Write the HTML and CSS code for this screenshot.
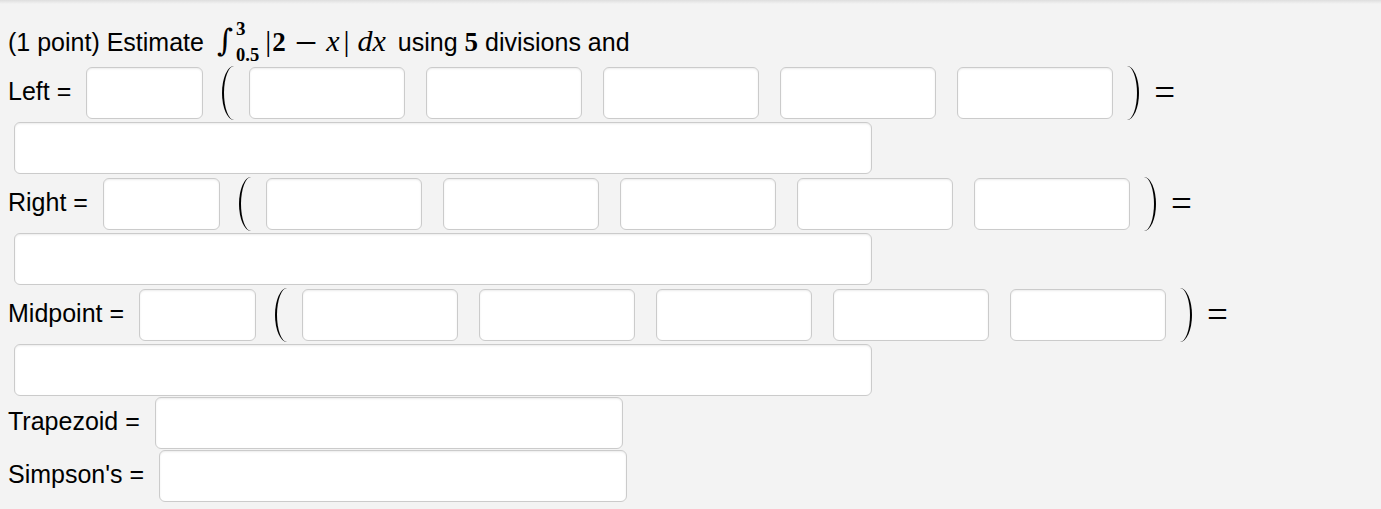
FILE: index.html
```html
<!DOCTYPE html>
<html>
<head>
<meta charset="utf-8">
<link rel="stylesheet" href="styles.css">
</head>
<body>
<div class="page">
  <p class="q">(1 point) Estimate <span class="math"><span class="int">∫</span><span class="sup">3</span><span class="sub">0.5</span><span class="abs">|</span><span class="mn">2</span><span class="mo">−</span><i class="mi">x</i><span class="abs close-abs">|</span><i class="mi d">d</i><i class="mi last">x</i></span> using <span class="mn five">5</span> divisions and</p>

  <div class="row">
    <span class="lbl">Left =</span>
    <input class="in sm" type="text">
    <span class="paren open"></span>
    <input class="in md first" type="text">
    <input class="in md" type="text">
    <input class="in md" type="text">
    <input class="in md" type="text">
    <input class="in md" type="text">
    <span class="paren close"></span>
    <span class="eq">=</span>
  </div>
  <div class="wrow"><input class="in wide" type="text"></div>

  <div class="row">
    <span class="lbl">Right =</span>
    <input class="in sm" type="text">
    <span class="paren open"></span>
    <input class="in md first" type="text">
    <input class="in md" type="text">
    <input class="in md" type="text">
    <input class="in md" type="text">
    <input class="in md" type="text">
    <span class="paren close"></span>
    <span class="eq">=</span>
  </div>
  <div class="wrow"><input class="in wide" type="text"></div>

  <div class="row">
    <span class="lbl">Midpoint =</span>
    <input class="in sm" type="text">
    <span class="paren open"></span>
    <input class="in md first" type="text">
    <input class="in md" type="text">
    <input class="in md" type="text">
    <input class="in md" type="text">
    <input class="in md" type="text">
    <span class="paren close"></span>
    <span class="eq">=</span>
  </div>
  <div class="wrow"><input class="in wide" type="text"></div>

  <div class="srow">
    <span class="lbl">Trapezoid =</span>
    <input class="in lg" type="text">
  </div>
  <div class="srow">
    <span class="lbl">Simpson's =</span>
    <input class="in lg" type="text">
  </div>
</div>
</body>
</html>
```

FILE: styles.css
```css
html, body {
  margin: 0;
  padding: 0;
  background: #f3f3f3;
}
.page {
  background: linear-gradient(#dedede, #f3f3f3 4px);
  min-height: 509px;
  box-sizing: border-box;
  padding: 27px 0 0 8px;
  font-family: "Liberation Sans", Arial, sans-serif;
  font-size: 25px;
  color: #000;
}
.q {
  margin: 0;
  height: 30px;
  line-height: 30px;
  white-space: nowrap;
}
.math {
  font-family: "Liberation Serif", "Times New Roman", serif;
  font-size: 30px;
  line-height: 0;
}
.int {
  font-family: "DejaVu Serif", serif;
  font-size: 31px;
  margin-left: 6px;
  margin-right: 3px;
  line-height: 0;
}
.sup, .sub {
  font-family: "Liberation Serif", "Times New Roman", serif;
  font-weight: bold;
  font-size: 19px;
  line-height: 0;
}
.sup {
  display: inline-block;
  width: 0;
  vertical-align: 16px;
  white-space: nowrap;
}
.sub {
  font-size: 18.5px;
  vertical-align: -10px;
  margin-right: 6px;
}
.mn {
  font-family: "Liberation Serif", "Times New Roman", serif;
  font-weight: bold;
  font-size: 27px;
  line-height: 0;
}
.abs + .mn {
  margin-left: 1px;
}
.mo {
  font-size: 40px;
  line-height: 0;
  vertical-align: -5px;
  margin: 0 9px 0 9px;
}
.mi {
  font-style: italic;
}
.close-abs {
  margin-left: 4px;
}
.d {
  margin-left: 8px;
}
.last {
  margin-right: 5px;
}
.row {
  display: flex;
  align-items: center;
  height: 56px;
  margin-top: 2px;
}
.q + .row {
  margin-top: 8px;
}
.wrow {
  display: flex;
  margin-top: 1px;
  padding-left: 6px;
}
.srow {
  display: flex;
  align-items: center;
  margin-top: 1px;
}
.lbl {
  white-space: nowrap;
  margin-bottom: 4px;
}
.in {
  box-sizing: border-box;
  height: 52px;
  margin: 0;
  padding: 4px 8px;
  background: #fff;
  border: 1px solid #cbcbcb;
  border-radius: 6px;
  box-shadow: inset 0 1px 2px rgba(0, 0, 0, 0.08);
  font-family: "Liberation Sans", Arial, sans-serif;
  font-size: 20px;
  flex: none;
}
.sm {
  width: 117px;
  margin-left: 15px;
}
.md {
  width: 156px;
  margin-left: 21px;
}
.md.first {
  margin-left: 15px;
}
.wide {
  width: 858px;
}
.lg {
  width: 468px;
  margin-left: 15px;
}
.paren {
  box-sizing: border-box;
  flex: none;
  width: 12px;
  height: 54px;
}
.paren.open {
  margin-left: 19px;
  border-left: 2.6px solid #000;
  border-radius: 12px 0 0 12px / 27px 0 0 27px;
}
.paren.close {
  margin-left: 14px;
  border-right: 2.6px solid #000;
  border-radius: 0 12px 12px 0 / 0 27px 27px 0;
}
.eq {
  font-family: "Liberation Serif", "Times New Roman", serif;
  font-size: 37px;
  line-height: 1;
  margin-left: 15px;
  margin-bottom: 2px;
}
```
